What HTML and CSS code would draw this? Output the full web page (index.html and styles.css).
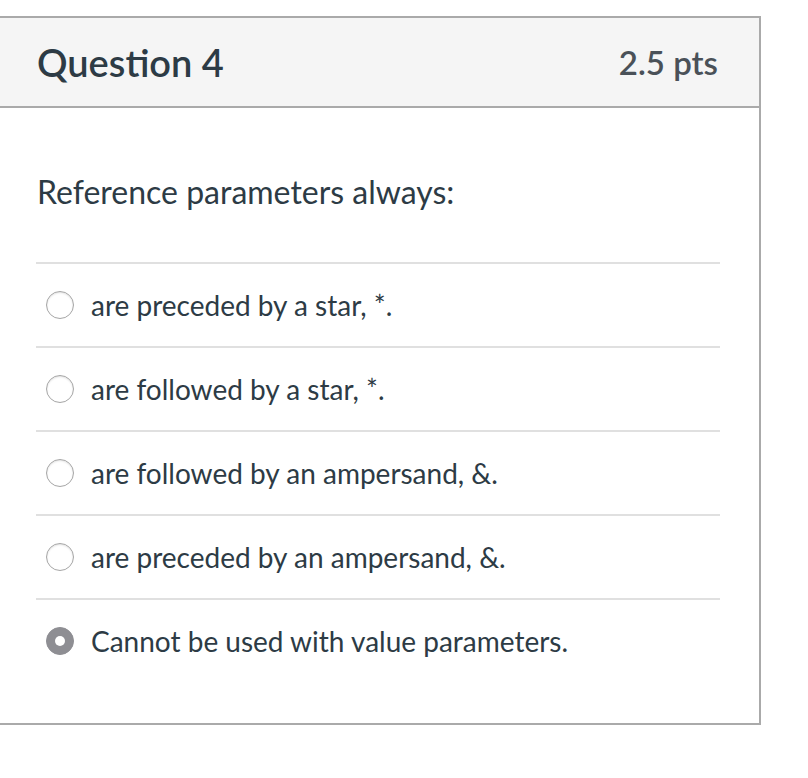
FILE: index.html
```html
<!DOCTYPE html>
<html lang="en">
<head>
    <meta charset="UTF-8">
    <meta name="viewport" content="width=device-width, initial-scale=1.0">
    <title>Question 4</title>
    <link rel="stylesheet" href="styles.css">
</head>
<body>
    <div class="question">
        <div class="header">
            <span class="name">Question 4</span>
            <span class="points">2.5 pts</span>
        </div>
        <div class="content">
            <p class="question-text">Reference parameters always:</p>
            <div class="answers">
                <label class="answer">
                    <span class="radio"></span>
                    <span class="answer-text">are preceded by a star, *.</span>
                </label>
                <label class="answer">
                    <span class="radio"></span>
                    <span class="answer-text">are followed by a star, *.</span>
                </label>
                <label class="answer">
                    <span class="radio"></span>
                    <span class="answer-text">are followed by an ampersand, &amp;.</span>
                </label>
                <label class="answer">
                    <span class="radio"></span>
                    <span class="answer-text">are preceded by an ampersand, &amp;.</span>
                </label>
                <label class="answer">
                    <span class="radio checked"></span>
                    <span class="answer-text">Cannot be used with value parameters.</span>
                </label>
            </div>
        </div>
    </div>
</body>
</html>
```

FILE: styles.css
```css
* {
    box-sizing: border-box;
}

body {
    font-family: Lato, "Open Sans", sans-serif;
    color: #2d3b45;
    background: #fff;
    margin: 0;
    padding: 0;
}

.question {
    width: 766px;
    margin: 16px 0 0 -5px;
    border: 2px solid #aaaaaa;
}

.header {
    display: flex;
    justify-content: space-between;
    align-items: center;
    height: 90px;
    padding: 0 41px 0 40px;
    background: #f5f5f5;
    border-bottom: 2px solid #aaaaaa;
}

.name {
    font-size: 38px;
    font-weight: 600;
}

.points {
    font-size: 33px;
    font-weight: 600;
    color: #4a5158;
}

.content {
    padding: 64px 39px 41px 39px;
}

.question-text {
    margin: 0;
    font-size: 32px;
    line-height: 39px;
    padding-left: 1px;
}

.answers {
    margin-top: 51px;
}

.answer {
    display: flex;
    align-items: center;
    height: 84px;
    padding-left: 10px;
    border-top: 2px solid #e0e0e0;
}

.radio {
    width: 28px;
    height: 28px;
    border-radius: 50%;
    border: 1.5px solid #a6a6a6;
    background: #fff;
    box-shadow: inset 0 1px 2px rgba(0, 0, 0, 0.12);
    flex-shrink: 0;
    display: flex;
    align-items: center;
    justify-content: center;
}

.radio.checked {
    background: #8e8e93;
    border-color: #8e8e93;
    box-shadow: none;
}

.radio.checked::after {
    content: "";
    width: 10px;
    height: 10px;
    border-radius: 50%;
    background: #fff;
}

.answer-text {
    margin-left: 17px;
    font-size: 28px;
}
```
